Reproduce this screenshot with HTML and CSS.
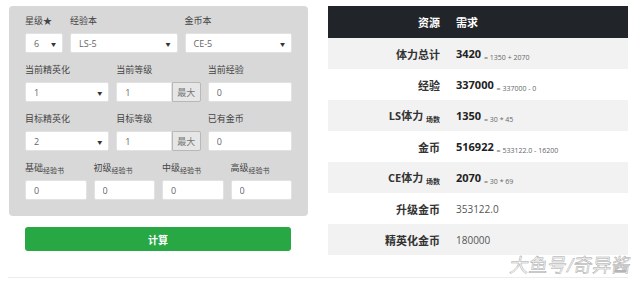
FILE: index.html
```html
<!DOCTYPE html>
<html lang="zh-CN">
<head>
    <meta charset="UTF-8">
    <meta name="viewport" content="width=device-width, initial-scale=1.0">
    <link rel="stylesheet" href="styles.css">
    <title>材料计算</title>
</head>
<body>
    <div class="page">
        <div class="calc">
            <div class="panel">
                <div class="row r1">
                    <div class="field">
                        <label>星级★</label>
                        <div class="select"><span>6</span><span class="arrow">▼</span></div>
                    </div>
                    <div class="field">
                        <label>经验本</label>
                        <div class="select"><span>LS-5</span><span class="arrow">▼</span></div>
                    </div>
                    <div class="field">
                        <label>金币本</label>
                        <div class="select"><span>CE-5</span><span class="arrow">▼</span></div>
                    </div>
                </div>
                <div class="row r3">
                    <div class="field">
                        <label>当前精英化</label>
                        <div class="select"><span>1</span><span class="arrow">▼</span></div>
                    </div>
                    <div class="field">
                        <label>当前等级</label>
                        <div class="input-group">
                            <input type="text" value="1">
                            <button class="btn-max">最大</button>
                        </div>
                    </div>
                    <div class="field">
                        <label>当前经验</label>
                        <input type="text" value="0">
                    </div>
                </div>
                <div class="row r3">
                    <div class="field">
                        <label>目标精英化</label>
                        <div class="select"><span>2</span><span class="arrow">▼</span></div>
                    </div>
                    <div class="field">
                        <label>目标等级</label>
                        <div class="input-group">
                            <input type="text" value="1">
                            <button class="btn-max">最大</button>
                        </div>
                    </div>
                    <div class="field">
                        <label>已有金币</label>
                        <input type="text" value="0">
                    </div>
                </div>
                <div class="row r4">
                    <div class="field">
                        <label>基础<small>经验书</small></label>
                        <input type="text" value="0">
                    </div>
                    <div class="field">
                        <label>初级<small>经验书</small></label>
                        <input type="text" value="0">
                    </div>
                    <div class="field">
                        <label>中级<small>经验书</small></label>
                        <input type="text" value="0">
                    </div>
                    <div class="field">
                        <label>高级<small>经验书</small></label>
                        <input type="text" value="0">
                    </div>
                </div>
            </div>
            <button class="btn-calc">计算</button>
        </div>

        <table class="result">
            <thead>
                <tr><th class="name">资源</th><th class="need">需求</th></tr>
            </thead>
            <tbody>
                <tr><td class="name">体力总计</td><td class="need"><b>3420</b> <span class="formula">= 1350 + 2070</span></td></tr>
                <tr><td class="name">经验</td><td class="need"><b>337000</b> <span class="formula">= 337000 - 0</span></td></tr>
                <tr><td class="name">LS体力 <small>场数</small></td><td class="need"><b>1350</b> <span class="formula">= 30 * 45</span></td></tr>
                <tr><td class="name">金币</td><td class="need"><b>516922</b> <span class="formula">= 533122.0 - 16200</span></td></tr>
                <tr><td class="name">CE体力 <small>场数</small></td><td class="need"><b>2070</b> <span class="formula">= 30 * 69</span></td></tr>
                <tr><td class="name">升级金币</td><td class="need plain">353122.0</td></tr>
                <tr><td class="name">精英化金币</td><td class="need plain">180000</td></tr>
            </tbody>
        </table>
    </div>
    <div class="rule"></div>
    <div class="watermark">大鱼号/奇异酱</div>
</body>
</html>
```

FILE: styles.css
```css
body {
    margin: 0;
    font-family: "Open Sans", "Noto Sans CJK SC", sans-serif;
    color: #333;
    background: #fff;
    position: relative;
    height: 286px;
    overflow: hidden;
}

.page {
    display: flex;
    align-items: flex-start;
    gap: 20px;
    padding: 6px 0 0 9px;
}

.calc {
    width: 299px;
}

.panel {
    background-color: #d8d8d8;
    border-radius: 4px;
    padding: 7px 16px 16px 16px;
}

.row {
    display: grid;
    gap: 7px;
    margin-bottom: 9px;
}

.row:last-child {
    margin-bottom: 0;
}

.r1 { grid-template-columns: 38px 1fr 1fr; }
.r3 { grid-template-columns: repeat(3, 1fr); }
.r4 { grid-template-columns: repeat(4, 1fr); }

.field {
    min-width: 0;
}

.field label {
    display: block;
    font-size: 9px;
    line-height: 16px;
    height: 16px;
    margin-bottom: 4px;
    color: #444;
    white-space: nowrap;
}

.field label small {
    font-size: 7px;
    vertical-align: -2px;
}

.select,
.field input {
    display: block;
    box-sizing: border-box;
    width: 100%;
    height: 20px;
    background-color: #fff;
    border: 1px solid #e2e2e2;
    border-radius: 2px;
    font-family: inherit;
    font-size: 9px;
    color: #666;
    padding: 0 8px;
    margin: 0;
    outline: none;
}

.select {
    display: flex;
    justify-content: space-between;
    align-items: center;
}

.arrow {
    font-size: 5px;
    color: #333;
    margin-right: -2px;
}

.input-group {
    display: flex;
}

.input-group input {
    flex: 1;
    min-width: 0;
    border-radius: 2px 0 0 2px;
}

.btn-max {
    flex: none;
    width: 29px;
    height: 20px;
    padding: 0;
    background-color: #e6e6e6;
    border: 1px solid #b8b8b8;
    border-radius: 0 2px 2px 0;
    font-family: inherit;
    font-size: 9px;
    color: #777;
}

.btn-calc {
    display: block;
    margin: 11px 0 0 16px;
    width: 266px;
    height: 24px;
    background-color: #28a745;
    color: #fff;
    border: none;
    border-radius: 3px;
    font-family: inherit;
    font-size: 10px;
    font-weight: bold;
}

.result {
    width: 300px;
    border-collapse: collapse;
    font-size: 11px;
}

.result th {
    background-color: #212529;
    color: #fff;
    height: 32px;
    font-weight: bold;
    padding: 0;
}

.result td {
    height: 31px;
    padding: 0;
}

.result tbody tr:nth-child(odd) {
    background-color: #f2f2f2;
}

.result .name {
    width: 120px;
    text-align: right;
    padding-right: 8px;
    box-sizing: border-box;
    font-weight: bold;
    color: #333;
}

.result .name small {
    font-size: 7px;
    vertical-align: -2px;
}

.result .need {
    text-align: left;
    padding-left: 8px;
    color: #444;
}

.result .plain {
    font-size: 10px;
    color: #555;
}

.result th.name,
.result th.need {
    color: #fff;
}

.result .need b {
    color: #222;
}

.formula {
    font-size: 7px;
    color: #666;
    vertical-align: -2px;
}

.rule {
    margin: 22px 0 0 8px;
    width: 620px;
    border-top: 1px solid #ececec;
}

.watermark {
    position: absolute;
    right: 10px;
    top: 250px;
    font-size: 19px;
    color: #fafafa;
    -webkit-text-stroke: 0.5px #a8a8a8;
    transform: skewX(-8deg);
}
```
